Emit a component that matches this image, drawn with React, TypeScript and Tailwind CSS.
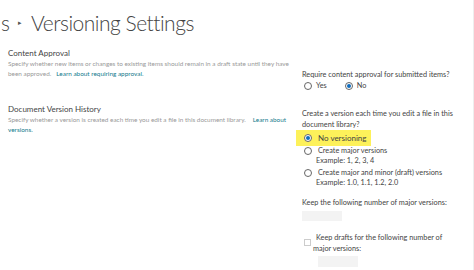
import React from "react";

function Radio({ checked }: { checked?: boolean }) {
  return (
    <span className="inline-flex h-[8px] w-[8px] shrink-0 items-center justify-center rounded-full border border-[#666] bg-white">
      {checked && <span className="h-[4px] w-[4px] rounded-full bg-[#0f6cbd]" />}
    </span>
  );
}

export default function App() {
  return (
    <div className="h-[270px] w-[474px] overflow-hidden border-r border-[#eee] bg-white text-[#333] [font-family:Lato,'Open_Sans',sans-serif]">
      {/* Title */}
      <div className="flex h-[44px] items-center pl-[1px] text-[21px] font-light leading-none tracking-[-0.5px] text-[#444]">
        <span>s</span>
        <span className="mx-[9px] text-[7px] text-[#555]">▸</span>
        <span>Versioning Settings</span>
      </div>

      <div className="flex">
        {/* Left column */}
        <div className="w-[294px] pl-[8px]">
          <div className="mt-[3px] text-[8px] text-[#444]">Content Approval</div>
          <div className="text-[6.4px] leading-[10px] text-[#999]">
            <div>Specify whether new items or changes to existing items should remain in a draft state until they have</div>
            <div className="flex gap-[5px]">
              <span>been approved.</span>
              <span className="text-[#137a8c]">Learn about requiring approval.</span>
            </div>
          </div>
          <div className="mt-[24px] text-[8px] text-[#444]">Document Version History</div>
          <div className="text-[6.4px] leading-[10px] text-[#999]">
            <div className="flex gap-[7px]">
              <span>Specify whether a version is created each time you edit a file in this document library.</span>
              <span className="text-[#137a8c]">Learn about</span>
            </div>
            <div className="text-[#137a8c]">versions.</div>
          </div>
        </div>

        {/* Right column */}
        <div className="flex-1 pl-[8px] text-[7.3px] text-[#444]">
          <div className="mt-[26px]">Require content approval for submitted items?</div>
          <div className="flex items-center gap-[4px] pl-[2px]">
            <Radio />
            <span>Yes</span>
            <span className="ml-[10px]" />
            <Radio checked />
            <span>No</span>
          </div>

          <div className="mt-[16px] leading-[11px]">
            <div>Create a version each time you edit a file in this</div>
            <div>document library?</div>
          </div>
          <div className="-ml-[6px] flex w-[75px] items-center gap-[6px] bg-[#fdf15a] py-[2px] pl-[8px] text-[8px]">
            <Radio checked />
            <span>No versioning</span>
          </div>
          <div className="flex items-center gap-[6px] pl-[2px] leading-[10.5px]">
            <Radio />
            <span>Create major versions</span>
          </div>
          <div className="pl-[14px] leading-[10.5px]">Example: 1, 2, 3, 4</div>
          <div className="mt-[1px] flex items-center gap-[6px] pl-[2px] leading-[10.5px]">
            <Radio />
            <span>Create major and minor (draft) versions</span>
          </div>
          <div className="pl-[14px] leading-[10.5px]">Example: 1.0, 1.1, 1.2, 2.0</div>

          <div className="mt-[9px]">Keep the following number of major versions:</div>
          <div className="mt-[2px] h-[10px] w-[40px] bg-[#f3f3f3]" />

          <div className="mt-[11px] flex items-center gap-[2px] pl-[2px]">
            <span className="h-[7px] w-[7px] shrink-0 border border-[#ccc]" />
            <div className="leading-[11px]">
              <div className="pl-[3px]">Keep drafts for the following number of</div>
              <div>major versions:</div>
            </div>
          </div>
          <div className="ml-[16px] mt-[2px] h-[11px] w-[40px] bg-[#f3f3f3]" />
        </div>
      </div>
    </div>
  );
}
